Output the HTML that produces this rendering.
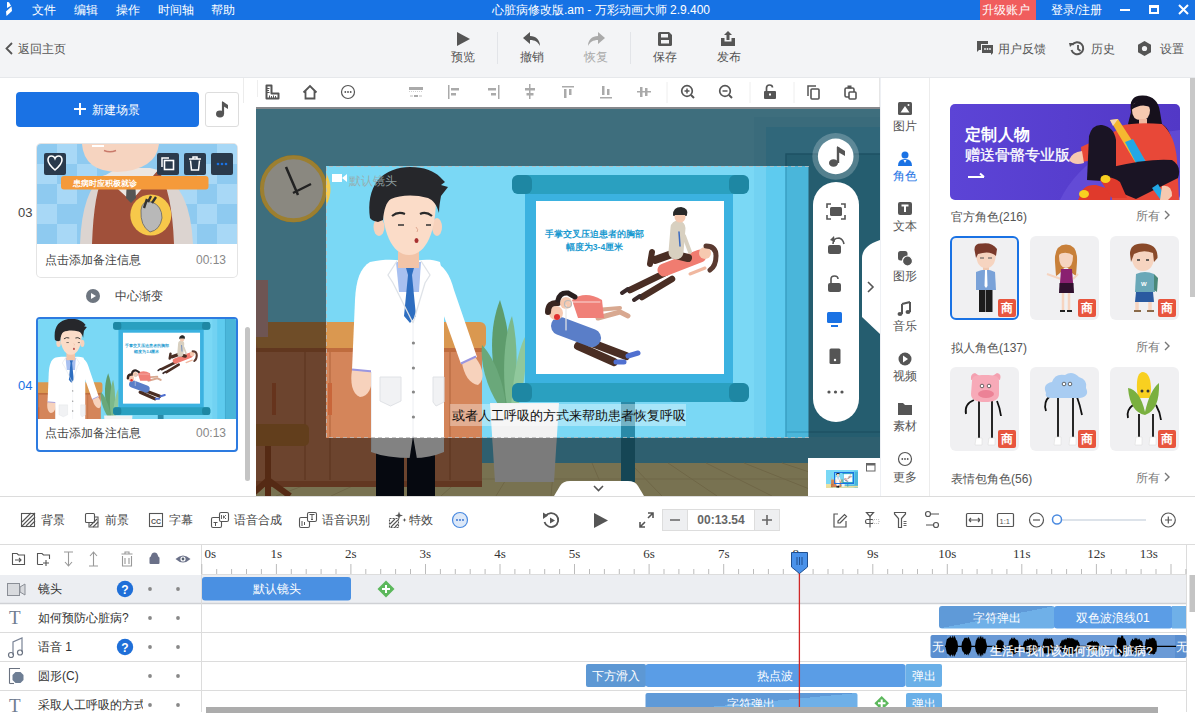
<!DOCTYPE html>
<html><head><meta charset="utf-8">
<style>
*{box-sizing:border-box;margin:0;padding:0}
html,body{width:1195px;height:719px;overflow:hidden;background:#fff;font-family:"Liberation Sans",sans-serif;font-size:13px;color:#333}
.a{position:absolute}
svg{position:absolute;overflow:visible}
#title{left:0;top:0;width:1195px;height:20px;background:#1672e4;color:#fff}
#tb{left:0;top:20px;width:1195px;height:58px;background:#f3f4f6;border-bottom:1px solid #e6e8eb}
.mi{top:3px;font-size:12px;line-height:14px;color:#fff}
.tbt{font-size:12px;line-height:14px;color:#555;white-space:nowrap}
.sep{width:1px;background:#e2e4e8}
</style></head><body>
<!-- title bar -->
<div id="title" class="a">
  <svg style="left:0;top:0" width="20" height="20" viewBox="0 0 20 20"><path d="M7 2L9 2.2L11 5.8L7 8Z" fill="#fff"/><path d="M6 11.5L11.5 6.5L12 11L6.5 16Z" fill="#fff"/></svg>
  <div class="a mi" style="left:32px">文件</div>
  <div class="a mi" style="left:74px">编辑</div>
  <div class="a mi" style="left:116px">操作</div>
  <div class="a mi" style="left:158px">时间轴</div>
  <div class="a mi" style="left:211px">帮助</div>
  <div class="a mi" style="left:450px;width:302px;text-align:center;white-space:nowrap">心脏病修改版.am - 万彩动画大师 2.9.400</div>
  <div class="a" style="left:980px;top:0;width:56px;height:20px;background:#f05d5d"></div>
  <div class="a mi" style="left:982px">升级账户</div>
  <div class="a mi" style="left:1051px">登录/注册</div>
  <div class="a" style="left:1120px;top:9px;width:10px;height:2px;background:#fff"></div>
  <div class="a" style="left:1149px;top:5px;width:10px;height:9px;border:2px solid #fff;border-top-width:3px"></div>
  <svg style="left:1178px;top:4px" width="11" height="11"><path d="M1 1L10 10M10 1L1 10" stroke="#fff" stroke-width="2"/></svg>
</div>
<!-- toolbar -->
<div id="tb" class="a">
  <svg style="left:5px;top:22px" width="8" height="13"><path d="M7 1L1.5 6.5L7 12" stroke="#555" stroke-width="1.8" fill="none"/></svg>
  <div class="a tbt" style="left:18px;top:22px">返回主页</div>

  <svg style="left:457px;top:12px" width="13" height="14"><path d="M0 0L13 7L0 14Z" fill="#555"/></svg>
  <div class="a tbt" style="left:451px;top:30px">预览</div>
  <div class="a sep" style="left:497px;top:12px;height:32px"></div>
  <svg style="left:523px;top:12px" width="18" height="14" viewBox="0 0 18 14"><path d="M7 0L0 6L7 12V8C12 8 15 10 17 14C17 8 13 4 7 4Z" fill="#555"/></svg>
  <div class="a tbt" style="left:520px;top:30px">撤销</div>
  <svg style="left:587px;top:12px" width="18" height="14" viewBox="0 0 18 14"><path d="M11 0L18 6L11 12V8C6 8 3 10 1 14C1 8 5 4 11 4Z" fill="#aaa"/></svg>
  <div class="a tbt" style="left:584px;top:30px;color:#aaa">恢复</div>
  <div class="a sep" style="left:630px;top:12px;height:32px"></div>
  <svg style="left:658px;top:12px" width="14" height="14" viewBox="0 0 14 14"><path d="M0 1.5Q0 0 1.5 0H11L14 3V12.5Q14 14 12.5 14H1.5Q0 14 0 12.5Z" fill="#555"/><rect x="3" y="2" width="7" height="3.5" fill="#f3f4f6"/><rect x="3" y="8" width="8" height="3.5" fill="#f3f4f6"/></svg>
  <div class="a tbt" style="left:653px;top:30px">保存</div>
  <svg style="left:721px;top:11px" width="14" height="15" viewBox="0 0 14 15"><path d="M7 0L11 4H8.5V9H5.5V4H3Z" fill="#555"/><path d="M0 7H3.5V10.5H10.5V7H14V15H0Z" fill="#555"/></svg>
  <div class="a tbt" style="left:717px;top:30px">发布</div>

  <svg style="left:977px;top:21px" width="16" height="15" viewBox="0 0 16 15"><path d="M0 0H11V3H4V9H2L0 11Z" fill="#555"/><path d="M5 4H16V12L14 14V12H5Z" fill="#555"/><circle cx="8" cy="8" r="0.9" fill="#f3f4f6"/><circle cx="10.5" cy="8" r="0.9" fill="#f3f4f6"/><circle cx="13" cy="8" r="0.9" fill="#f3f4f6"/></svg>
  <div class="a tbt" style="left:998px;top:22px">用户反馈</div>
  <svg style="left:1069px;top:21px" width="16" height="15" viewBox="0 0 16 15"><path d="M3.2 4A6 6 0 1 1 2.5 9" stroke="#555" stroke-width="2" fill="none"/><path d="M0 2L5 2L1 6Z" fill="#555"/><path d="M9 4V8L11.5 10" stroke="#555" stroke-width="1.8" fill="none"/></svg>
  <div class="a tbt" style="left:1091px;top:22px">历史</div>
  <svg style="left:1137px;top:21px" width="15" height="15" viewBox="0 0 15 15"><path d="M7.5 0L14 3.75V11.25L7.5 15L1 11.25V3.75Z" fill="#555"/><circle cx="7.5" cy="7.5" r="2.6" fill="#f3f4f6"/></svg>
  <div class="a tbt" style="left:1160px;top:22px">设置</div>
</div>

<!-- left panel -->
<div class="a" style="left:0;top:78px;width:256px;height:418px;background:#fff"></div>
<!-- canvas toolbar -->
<div class="a" style="left:256px;top:78px;width:624px;height:29px;background:#fff"></div>
<!-- canvas -->
<svg style="left:256px;top:107px;overflow:hidden" width="624" height="389" viewBox="256 107 624 389">
<defs>
 <clipPath id="sel"><rect x="326" y="166" width="482" height="272"/></clipPath>
 <clipPath id="cv"><rect x="256" y="107" width="624" height="389"/></clipPath>
 <g id="scene">
  <rect x="256" y="107" width="624" height="389" fill="#7ad8f5"/>
  <rect x="754" y="117" width="126" height="379" fill="#72d2f2"/>
  <rect x="766" y="127" width="114" height="369" fill="#5ecbef"/>
  <rect x="786" y="154" width="94" height="342" fill="#4ab6da"/>
  <path d="M786 437V154H880M786 432H880" stroke="#3aa0c4" stroke-width="1.5" fill="none"/>
  <!-- baseboard + floor -->
  <rect x="256" y="437" width="624" height="26" fill="#5abbd9"/>
  <rect x="256" y="463" width="624" height="33" fill="#ece0a0"/>
  <path d="M250 463L110 496M288 463L166 496M326 463L221 496M364 463L276 496M402 463L331 496M440 463L386 496M478 463L441 496M516 463L496 496M554 463L551 496M592 463L606 496M630 463L662 496M668 463L717 496M706 463L772 496M744 463L827 496M782 463L882 496M820 463L937 496M858 463L992 496M896 463L1047 496M256 479H880" stroke="#d8c88a" stroke-width="1" fill="none"/>
  <!-- cabinet -->
  <rect x="256" y="336" width="226" height="151" fill="#d4855a"/>
  <rect x="256" y="322" width="230" height="27" rx="6" fill="#da9850"/>
  <rect x="256" y="348" width="226" height="4" fill="#bf6c3e"/>
  <path d="M305 352V480M330 352V480M420 352V480M450 352V480" stroke="#c2744a" stroke-width="2"/>
  <rect x="256" y="481" width="226" height="6" fill="#c06c42"/>
  <rect x="272" y="383" width="4" height="32" fill="#c8663a"/>
  <rect x="328" y="383" width="4" height="32" fill="#c8663a"/>
  <!-- stool -->
  <rect x="250" y="424" width="59" height="22" rx="5" fill="#c07a38"/>
  <path d="M268 446V496M268 480L250 496M268 480L290 496" stroke="#a85428" stroke-width="6" fill="none"/>
  <rect x="256" y="280" width="12" height="57" fill="#d8a8a4"/>
  <!-- plant -->
  <path d="M503 405C490 370 488 330 500 300C510 330 514 370 511 405Z" fill="#5e9c6c"/>
  <path d="M499 406C486 386 480 362 482 345C496 360 504 386 506 406Z" fill="#6aa87a"/>
  <path d="M507 406C501 372 505 332 512 316C519 346 517 382 513 406Z" fill="#7cb88a"/>
  <path d="M511 406C513 382 517 352 525 337C528 362 523 392 518 406Z" fill="#90c89c"/>
  <path d="M490 403H559L554 482H495Z" fill="#f2f2f2"/>
  <!-- board -->
  <rect x="621" y="400" width="14" height="82" fill="#2a8aa8"/>
  <rect x="525" y="190" width="208" height="200" fill="#3bb2e0"/>
  <rect x="536" y="201" width="188" height="173" fill="#fff"/>
  <rect x="512" y="175" width="237" height="19" rx="8" fill="#2aa0c0"/>
  <rect x="512" y="175" width="20" height="19" rx="6" fill="#1e87a3"/>
  <rect x="729" y="175" width="20" height="19" rx="6" fill="#1e87a3"/>
  <rect x="512" y="383" width="237" height="19" rx="8" fill="#2aa0c0"/>
  <rect x="512" y="383" width="20" height="19" rx="6" fill="#1e87a3"/>
  <rect x="729" y="383" width="20" height="19" rx="6" fill="#1e87a3"/>
 </g>
 <g id="doctor">
  <!-- pants -->
  <rect x="376" y="450" width="28" height="50" fill="#0c1220"/>
  <rect x="407" y="450" width="28" height="50" fill="#0c1220"/>
  <!-- hands -->
  <path d="M352 370C350 382 352 394 360 397C368 397 373 388 372 372Z" fill="#f7d2bc"/>
  <path d="M462 363C464 375 470 384 478 385C485 380 484 368 475 357Z" fill="#f7d2bc"/>
  <!-- arms -->
  <path d="M370 262C360 268 356 280 355 300L352 370L373 372L376 300Z" fill="#fff"/>
  <path d="M432 262C444 264 450 275 454 290L477 357L461 364L440 305Z" fill="#fff"/>
  <path d="M352 369.5L373 371.5" stroke="#9a96e0" stroke-width="2"/>
  <path d="M461 363.5L476 356.5" stroke="#9a96e0" stroke-width="2"/>
  <!-- coat -->
  <path d="M370 262C388 258 400 260 409 262C418 260 430 258 440 262C444 280 444 300 444 305V452Q430 458 413 458Q386 458 371 452V300C371 290 370 275 370 262Z" fill="#fff"/>
  <path d="M371.5 372V450" stroke="#eef0f4" stroke-width="1"/>
  <path d="M396 262H421L419 292H399Z" fill="#a8c0f0"/>
  <path d="M406 268H414L412 275L416 316L410 323L404 316L408 275Z" fill="#2e6ec0"/>
  <path d="M397 261L388 275L393 283L413 323M421 261L430 275L425 283L413 323" stroke="#dfe3e8" stroke-width="1.3" fill="none"/>
  <path d="M413 323V438" stroke="#eceef2" stroke-width="1"/><path d="M413 436L409.5 459H417Z" fill="#0c1220"/>
  <circle cx="413.4" cy="343" r="1.6" fill="#888"/><circle cx="413.4" cy="368" r="1.6" fill="#888"/><circle cx="413.4" cy="392" r="1.6" fill="#888"/><circle cx="413.4" cy="417" r="1.6" fill="#888"/>
  <path d="M380 377H401V401L390.5 406L380 401Z" fill="#f1f2f4" stroke="#e0e2e6" stroke-width="1"/>
  <path d="M433 377H444V402L436 406L433 402Z" fill="#f1f2f4" stroke="#e0e2e6" stroke-width="1"/>
  <!-- neck/face -->
  <rect x="398" y="248" width="21" height="20" fill="#f2c4a8"/>
  <ellipse cx="379" cy="227" rx="5.5" ry="9" fill="#f7d2bc"/>
  <ellipse cx="437" cy="227" rx="5" ry="9" fill="#f7d2bc"/>
  <path d="M382 192C381 232 392 255 409 255C426 255 437 232 436 192Z" fill="#fbdcc8"/>
  <path d="M370 218C368 204 370 190 378 180C386 171 398 167 410 167C424 167 434 171 440 177L445 182L441 185L448 187L441 196C440 202 439 207 439 213C437 205 433 200 428 198C414 194 400 195 391 199C386 202 384 210 383 220L378 222C374 221 371 220 370 218Z" fill="#26272b"/>
  <path d="M392 216Q398 211 405 214M420 214Q426 211 432 216" stroke="#2a2a2a" stroke-width="2.2" fill="none"/>
  <path d="M398 225H404M426 225H431" stroke="#333" stroke-width="1.6"/>
  <path d="M416 227Q419 230 417 232" stroke="#e0a890" stroke-width="1" fill="none"/>
  <ellipse cx="416.5" cy="240.5" rx="2" ry="2.6" fill="#a83030"/>
 </g>
 <g id="board">

<text x="594" y="236.5" font-size="8.9" fill="#1a9ad0" text-anchor="middle" font-weight="bold">手掌交叉压迫患者的胸部</text>
<text x="594.5" y="249.5" font-size="8.6" fill="#1a9ad0" text-anchor="middle" font-weight="bold">幅度为3-4厘米</text>
<g stroke-linecap="round" fill="none">
 <!-- top woman lying -->
 <path d="M667 272L630 290M672 279L642 297" stroke="#4a2e24" stroke-width="6.5"/>
 <path d="M628 289L622 293M640 296L634 300" stroke="#3a2a2a" stroke-width="4"/>
 <path d="M664 270L700 256" stroke="#f07c70" stroke-width="13"/>
 <path d="M690 274L705 268" stroke="#f0b8a0" stroke-width="3"/>
 <circle cx="705" cy="253" r="6" fill="#f6c9b0"/>
 <path d="M706 246Q716 246 716 256Q716 266 710 270" stroke="#5a3a30" stroke-width="5"/>
 <!-- top man kneeling -->
 <path d="M655 260L672 254L688 258" stroke="#4a2e24" stroke-width="8"/>
 <path d="M652 252L650 264" stroke="#4a2e24" stroke-width="6"/>
 <path d="M678 228L676 252" stroke="#d8d0c0" stroke-width="15"/>
 <path d="M679 232L680 246" stroke="#3a6ac0" stroke-width="1.5"/>
 <path d="M684 236L690 252" stroke="#d8d0c0" stroke-width="4"/>
 <circle cx="680" cy="217" r="5.5" fill="#f6c9b0"/>
 <path d="M674 215Q674 208 681 208Q688 209 686 215" fill="#2a2a2a" stroke="#2a2a2a" stroke-width="2"/>
 <!-- bottom man lying -->
 <path d="M584 340L626 356M578 346L614 362" stroke="#4a2e24" stroke-width="8"/>
 <path d="M628 356L638 353M616 362L624 362" stroke="#5070d0" stroke-width="5"/>
 <path d="M560 326L592 338" stroke="#5a7ec8" stroke-width="18"/>
 <circle cx="556" cy="313" r="7" fill="#f6c9b0"/>
 <path d="M548 312Q548 302 558 303" stroke="#3a2620" stroke-width="6"/>
 <circle cx="557" cy="317" r="3" fill="#e03030"/>
 <!-- bottom woman kneeling -->
 <path d="M598 318L620 312L628 316" stroke="#d8a890" stroke-width="5"/>
 <path d="M596 310L620 308" stroke="#d8a890" stroke-width="4"/>
 <path d="M572 300Q585 290 602 300L604 318L578 318Z" fill="#f08078"/>
 <circle cx="566" cy="303" r="6" fill="#f6c9b0"/>
 <path d="M558 300Q560 292 568 293L575 297" stroke="#2a2020" stroke-width="5"/>
 <path d="M566 305V330" stroke="#e8e8e8" stroke-width="1.2"/>
 <path d="M570 302H600" stroke="#fff" stroke-width="1" stroke-opacity="0.7"/>
 <circle cx="568" cy="304" r="3.5" stroke="#bbb" stroke-width="1.2"/>
</g>
 </g>
 <path id="ov" fill-rule="evenodd" d="M256 107H880V496H256Z M326 166H808.5V438H326Z"/>
</defs>
<use href="#scene"/>
<!-- clock (outside) -->
<circle cx="293.5" cy="188.8" r="31.5" fill="#f8f0e0" stroke="#f0c848" stroke-width="4"/>
<use href="#doctor"/>
<use href="#board"/>
<!-- overlay -->
<use href="#ov" fill="#000" fill-opacity="0.49"/>
<!-- clock hands over overlay -->
<circle cx="293.5" cy="188.8" r="31.5" fill="#8a8880" stroke="#9c7f30" stroke-width="4"/>
<path d="M286 167L298 195M293 193L311 184" stroke="#222" stroke-width="2.5"/>
<path d="M326 173Q335 189 326 206Z" fill="#f5cc50"/>
<!-- selection dashed border -->
<path d="M809 166.5H326.5V437.5H809" fill="none" stroke="#bbb" stroke-opacity="0.8" stroke-width="1" stroke-dasharray="4 3"/>
<!-- camera label -->
<rect x="332" y="174" width="10" height="8" fill="#fff"/><path d="M342 178L347 174V182Z" fill="#fff"/>
<text x="349" y="185" font-size="12" fill="#9aa" fill-opacity="0.9">默认镜头</text>
<!-- subtitle -->
<rect x="450" y="404" width="236" height="22" fill="#fff" fill-opacity="0.35"/>
<text x="452" y="420" font-size="13" fill="#111">或者人工呼吸的方式来帮助患者恢复呼吸</text>
<!-- right tools -->
<circle cx="835.7" cy="156.4" r="23.4" fill="#fff" fill-opacity="0.22"/>
<circle cx="835.7" cy="156.4" r="17.8" fill="#fff"/>
<path d="M838 147V163" stroke="#555" stroke-width="2.4"/><ellipse cx="833.5" cy="163" rx="4.5" ry="3.8" fill="#555"/><path d="M837 146L845 151L845 156L838 152Z" fill="#555"/>
<rect x="813" y="182" width="46" height="240" rx="23" fill="#fff"/>
<g fill="#555">
 <rect x="830" y="207" width="12" height="9" rx="1.5"/>
 <path d="M827 208V204H831M841 204H845V208M845 215V219H841M831 219H827V215" stroke="#555" stroke-width="1.6" fill="none"/>
 <rect x="828" y="245" width="13" height="9" rx="2"/>
 <path d="M833 244Q833 238 839 238Q843 239 844 244" stroke="#555" stroke-width="1.6" fill="none"/><path d="M830 240L834 236L835 242Z"/>
 <rect x="828" y="283" width="13" height="9" rx="2"/>
 <path d="M831 283V279Q831 276 834.5 276Q838 276 838 279" stroke="#555" stroke-width="1.6" fill="none"/>
 <rect x="829.5" y="348.5" width="11" height="15.5" rx="1.5"/>
 <circle cx="829" cy="392" r="1.6"/><circle cx="835.5" cy="392" r="1.6"/><circle cx="842" cy="392" r="1.6"/>
</g>
<rect x="827" y="312" width="15" height="11" rx="1.5" fill="#1a72e4"/><rect x="831" y="325" width="7" height="2" fill="#1a72e4"/>
<circle cx="835" cy="360" r="1.2" fill="#fff"/>
<!-- collapse tab right -->
<path d="M880 240V334L862 317V258Q862 246 880 240Z" fill="#fff" />
<path d="M868 282L873 287L868 292" stroke="#555" stroke-width="1.6" fill="none"/>
<!-- bottom collapse tab -->
<path d="M554 496L560 486Q563 481 570 481H628Q635 481 638 486L644 496Z" fill="#fff"/>
<path d="M594 486L598.5 490.5L603 486" stroke="#555" stroke-width="1.6" fill="none"/>
<!-- minimap -->
<rect x="808" y="458" width="72" height="38" fill="#fff"/>
<clipPath id="mm"><rect x="826" y="470" width="32" height="18"/></clipPath>
<g clip-path="url(#mm)"><rect x="826" y="470" width="32" height="18" fill="#7ad8f5"/><rect x="826" y="484" width="32" height="4" fill="#ece0a0"/><g transform="translate(819.6,465.1) scale(0.045)"><use href="#scene"/><use href="#doctor"/><use href="#board"/></g></g>
<rect x="834.5" y="472.5" width="19" height="11" fill="none" stroke="#1a72e4" stroke-width="1"/>
<rect x="866.5" y="463.5" width="8.5" height="7.5" fill="none" stroke="#666" stroke-width="1"/><rect x="866.5" y="463.5" width="8.5" height="2" fill="#666"/>
<rect x="256" y="107" width="624" height="2" fill="#86888c"/>
</svg>

<!-- canvas toolbar icons -->
<svg style="left:256px;top:78px" width="624" height="29" viewBox="256 78 624 29">
<path d="M266.5 85.5H271.5V93.5H278.5V98.5H266.5Z" fill="#fff" stroke="#555" stroke-width="2" stroke-linejoin="round"/><path d="M269.5 98V95.5M271.5 98V96M273.5 98V95.5M275.5 98V96M267 88.5H269.5M267 90.5H269M267 92.5H269.5" stroke="#555" stroke-width="1"/>
<path d="M303.5 92.5L310 86L316.5 92.5M305.5 91V98.5H314.5V91" stroke="#555" stroke-width="1.8" fill="none"/>
<circle cx="348" cy="92" r="6.5" stroke="#555" stroke-width="1.2" fill="none"/>
<circle cx="345.3" cy="92" r="0.9" fill="#555"/><circle cx="348" cy="92" r="0.9" fill="#555"/><circle cx="350.7" cy="92" r="0.9" fill="#555"/>
<g fill="#aaa">
 <rect x="409" y="87" width="14" height="3"/><path d="M409 91.5H423" stroke="#bbb" stroke-width="0.7" stroke-dasharray="1 1"/><rect x="414" y="95" width="4" height="2"/><path d="M410 96H413M419 96H422" stroke="#aaa" stroke-width="0.8"/>
 <rect x="448" y="85" width="1.5" height="14"/><rect x="451" y="88" width="8" height="2.5"/><rect x="451" y="93" width="5" height="2.5"/>
 <rect x="498" y="85" width="1.5" height="14"/><rect x="488" y="88" width="8" height="2.5"/><rect x="491" y="93" width="5" height="2.5"/>
 <rect x="529" y="84" width="1.5" height="15"/><rect x="525" y="88" width="10" height="2.5"/><rect x="526.5" y="93" width="7" height="2.5"/>
 <rect x="562" y="86" width="12" height="1.5"/><rect x="564" y="89" width="2.5" height="9"/><rect x="569" y="89" width="2.5" height="6"/>
 <rect x="600" y="97" width="12" height="1.5"/><rect x="602" y="86" width="2.5" height="9"/><rect x="607" y="89" width="2.5" height="6"/>
 <rect x="637" y="91" width="14" height="1.5"/><rect x="640" y="87" width="2.5" height="10"/><rect x="645" y="88" width="2.5" height="8"/>
</g>
<path d="M667 82V103M750 82V103M794 82V103" stroke="#eee" stroke-width="1"/>
<circle cx="687" cy="91" r="5.3" stroke="#555" stroke-width="1.7" fill="none"/><path d="M691 95L694 98" stroke="#555" stroke-width="2"/><path d="M684.5 91H689.5M687 88.5V93.5" stroke="#555" stroke-width="1.5"/>
<circle cx="725" cy="91" r="5.3" stroke="#555" stroke-width="1.7" fill="none"/><path d="M729 95L732 98" stroke="#555" stroke-width="2"/><path d="M722.5 91H727.5" stroke="#555" stroke-width="1.5"/>
<rect x="764" y="91" width="12" height="8" rx="1" fill="#555"/><path d="M766.5 91V88Q766.5 85 769.5 85Q772.5 85 772.5 87.5" stroke="#555" stroke-width="1.7" fill="none"/><rect x="769" y="93.5" width="2" height="2" fill="#fff"/>
<path d="M808 96V86H816" stroke="#555" stroke-width="1.5" fill="none"/><rect x="811" y="89" width="8" height="10" rx="1" stroke="#555" stroke-width="1.6" fill="none"/>
<rect x="845" y="88" width="9" height="9" rx="1.5" stroke="#555" stroke-width="1.6" fill="none"/><rect x="849" y="92" width="7" height="7" rx="1" stroke="#555" stroke-width="1.6" fill="#fff"/><rect x="847.5" y="85.5" width="4" height="3" fill="#555"/>
<path d="M879.5 78V107" stroke="#e6e6e6"/><path d="M257.5 80V97" stroke="#eee"/>
</svg>

<!-- icon column -->
<div class="a" style="left:880px;top:78px;width:50px;height:418px;background:#fff;border-right:1px solid #ececec;border-left:1px solid #eef0f4"></div>
<style>
.ic{position:absolute;width:50px;text-align:center;font-size:12px;line-height:13px;color:#555}
.rh{position:absolute;font-size:12px;line-height:14px;color:#555}
.all{position:absolute;font-size:12px;line-height:14px;color:#777}
.card{position:absolute;width:69px;height:84px;border-radius:6px;background:#f0f0f2}
.bd{position:absolute;right:3px;bottom:3px;width:18px;height:18px;border-radius:2px;background:#e8553e;color:#fff;font-size:12px;line-height:18px;text-align:center;font-weight:bold}
</style>
<svg style="left:880px;top:78px" width="50" height="418" viewBox="880 78 50 418">
 <rect x="898" y="102" width="14" height="13" rx="1.5" fill="#555"/><path d="M900.5 112.5L905 106L909.5 112.5Z" fill="#fff"/><circle cx="908.5" cy="105" r="1" fill="#fff"/>
 <circle cx="905" cy="155" r="3.5" fill="#1a72e4"/><path d="M898 166Q898 159 905 159Q912 159 912 166Z" fill="#1a72e4"/><path d="M903.5 160L905 163L906.5 160" fill="#fff"/>
 <rect x="898" y="202" width="14" height="13" rx="2" fill="#555"/><path d="M901.5 205.5H908.5M905 205.5V212" stroke="#fff" stroke-width="2"/>
 <rect x="898" y="251" width="9.5" height="9.5" rx="2.5" fill="#555"/><circle cx="907.5" cy="261" r="5" fill="#555" stroke="#fff" stroke-width="1.2"/>
 <path d="M902 304V314M910 302V312M902 304L910 302" stroke="#555" stroke-width="2" fill="none"/><ellipse cx="900" cy="314" rx="2.5" ry="2" fill="#555"/><ellipse cx="908" cy="312" rx="2.5" ry="2" fill="#555"/>
 <circle cx="905" cy="359" r="6.5" fill="#555"/><path d="M903 355.5V362.5L908 359Z" fill="#fff"/>
 <path d="M898 403H903L905 405H912V415H898Z" fill="#555"/>
 <circle cx="905" cy="459" r="6.5" fill="none" stroke="#555" stroke-width="1.2"/><circle cx="902.3" cy="459" r="0.9" fill="#555"/><circle cx="905" cy="459" r="0.9" fill="#555"/><circle cx="907.7" cy="459" r="0.9" fill="#555"/>
</svg>
<div class="ic" style="left:880px;top:120px">图片</div>
<div class="ic" style="left:880px;top:170px;color:#1a72e4">角色</div>
<div class="ic" style="left:880px;top:220px">文本</div>
<div class="ic" style="left:880px;top:270px">图形</div>
<div class="ic" style="left:880px;top:320px">音乐</div>
<div class="ic" style="left:880px;top:370px">视频</div>
<div class="ic" style="left:880px;top:420px">素材</div>
<div class="ic" style="left:880px;top:471px">更多</div>

<!-- right panel -->
<div class="a" style="left:930px;top:78px;width:265px;height:418px;background:#fff"></div>
 <svg style="left:930px;top:78px" width="265" height="418" viewBox="930 78 265 418">
  <defs><linearGradient id="bg1" x1="0" x2="1"><stop offset="0" stop-color="#5c44d6"/><stop offset="1" stop-color="#5238c6"/></linearGradient>
  <clipPath id="bcl"><rect x="950" y="90" width="230" height="110"/></clipPath></defs>
  <rect x="950" y="104" width="230" height="96" rx="5" fill="url(#bg1)"/>
  <path d="M1060 200Q1090 140 1180 130V200Z" fill="#6a55dc" fill-opacity="0.6"/>
  <g clip-path="url(#bcl)">
   <path d="M1131 112Q1128 95 1143 95.5Q1158 96 1160 112L1162 124Q1172 130 1173 150L1150 150L1128 124Z" fill="#16101c"/>
   <path d="M1132 110Q1132 120 1141 120Q1150 120 1150 110Q1149 101 1141 101Q1133 101 1132 110Z" fill="#f6c9b0"/>
   <path d="M1131 110Q1134 99 1145 99Q1152 101 1152 108Q1142 102 1131 110Z" fill="#16101c"/>
   <rect x="1139" y="119" width="8" height="6" fill="#f0b8a0"/>
   <path d="M1120 126Q1135 122 1162 124Q1175 135 1177 160L1179 200H1112L1112 150Z" fill="#e84838"/>
   <path d="M1122 128L1081 147L1082 162L1118 156Z" fill="#e84838"/>
   <path d="M1082 151Q1072 152 1069 160Q1074 166 1084 163Z" fill="#f6c9b0"/>
   <path d="M1087 180L1089 136Q1092 124 1102 125Q1114 127 1116 140L1116 182Z" fill="#1a1424"/>
   <path d="M1110 120L1118 119L1146 162L1138 167Z" fill="#f5b830"/>
   <path d="M1125 142L1133 139L1146 162L1138 167Z" fill="#22a8e6"/>
   <path d="M1110 120L1118 119L1113 126Z" fill="#f6d8b0"/>
   <path d="M1112 167Q1150 158 1172 160Q1182 166 1178 178L1136 199L1114 190Z" fill="#1a1424"/>
   <path d="M1152 188L1158 184L1165 196L1160 199Z" fill="#22a8e6"/>
   <path d="M1079 198Q1082 184 1096 185L1112 190L1110 200H1078Z" fill="#e03a2c"/>
   <path d="M1100 180Q1110 174 1120 182L1127 198H1112Z" fill="#e03a2c"/>
   <ellipse cx="1084" cy="194" rx="5" ry="4" fill="#f8d020"/>
   <ellipse cx="1105.5" cy="179" rx="5" ry="4" fill="#f8d020"/>
   <path d="M1162 186Q1172 184 1172 196L1168 200H1160Z" fill="#f6c9b0"/>
  </g>
  <path d="M968 177H984M980 173.5L984 177" stroke="#fff" stroke-width="2" fill="none"/>
 </svg>
 <div class="a" style="left:965px;top:126px;font-size:15.5px;line-height:18px;color:#fff;font-weight:bold;letter-spacing:0.3px">定制人物</div>
 <div class="a" style="left:965px;top:146px;font-size:14.5px;line-height:18px;color:#fff;font-weight:normal;-webkit-text-stroke:0.3px #fff">赠送骨骼专业版</div>
 <div class="rh" style="left:951px;top:210px">官方角色(216)</div>
 <div class="all" style="left:1136px;top:209px">所有</div>
 <div class="rh" style="left:951px;top:341px">拟人角色(137)</div>
 <div class="all" style="left:1136px;top:340px">所有</div>
 <div class="rh" style="left:951px;top:472px">表情包角色(56)</div>
 <div class="all" style="left:1136px;top:471px">所有</div>
 <svg style="left:1164px;top:210px" width="6" height="10"><path d="M1 1L5 5L1 9" stroke="#777" stroke-width="1.4" fill="none"/></svg>
 <svg style="left:1164px;top:341px" width="6" height="10"><path d="M1 1L5 5L1 9" stroke="#777" stroke-width="1.4" fill="none"/></svg>
 <svg style="left:1164px;top:472px" width="6" height="10"><path d="M1 1L5 5L1 9" stroke="#777" stroke-width="1.4" fill="none"/></svg>
 <div class="card" style="left:950px;top:236px;border:2px solid #1a72e4"></div>
 <div class="card" style="left:1030px;top:236px"></div>
 <div class="card" style="left:1110px;top:236px"></div>
 <div class="card" style="left:950px;top:367px"></div>
 <div class="card" style="left:1030px;top:367px"></div>
 <div class="card" style="left:1110px;top:367px"></div>
 <svg style="left:930px;top:230px" width="260" height="240" viewBox="930 230 260 240">
  <!-- man -->
  <rect x="979" y="288" width="6.5" height="24" fill="#1c1c1c"/><rect x="986" y="288" width="6.5" height="24" fill="#1c1c1c"/>
  <path d="M976 272Q986 267 995 272L996 290H976Z" fill="#7aa2d8"/>
  <path d="M985 270H987L987.5 286L986 288L984.5 286Z" fill="#fff"/>
  <rect x="983" y="265" width="6" height="5" fill="#f0c8b0"/>
  <path d="M976 252Q976 268 986 268Q996 268 996 252Z" fill="#f6d4c0"/>
  <path d="M974.5 250Q974 243 982 243.5Q992 242 997 249L996 256Q990 250 978 254L976 258Z" fill="#7a3a2c"/>
  <path d="M980 258H984M988 258H992" stroke="#555" stroke-width="1"/>
  <!-- woman -->
  <path d="M1055 262Q1054 245 1066 244.5Q1078 245 1077 262L1076 276Q1070 272 1068 268H1064Q1060 274 1056 276Z" fill="#c8803a"/>
  <path d="M1059 256Q1059 268 1066 268Q1073 268 1073 256Q1072 249 1066 249Q1060 249 1059 256Z" fill="#f6d4c0"/>
  <path d="M1058 255Q1060 247 1068 248Q1074 250 1074 256Q1066 250 1058 255Z" fill="#c8803a"/>
  <path d="M1047 274L1061 279M1073 279L1078 274" stroke="#f6d4c0" stroke-width="2"/>
  <path d="M1061 269H1072L1073 283H1060Z" fill="#8a2070"/>
  <path d="M1059.5 283H1073.5L1074 293H1059Z" fill="#30102e"/>
  <path d="M1063 293V310M1069 293V310" stroke="#f6d4c0" stroke-width="2.5"/>
  <path d="M1060 311H1065M1067 311H1072" stroke="#222" stroke-width="1.8"/>
  <!-- boy -->
  <path d="M1137 302V310M1150 302V310" stroke="#f6d4c0" stroke-width="3.5"/>
  <path d="M1134 311H1141M1147 311H1154" stroke="#8a6a4a" stroke-width="2"/>
  <path d="M1136 292H1153L1154 302H1135Z" fill="#2a5aa0"/>
  <path d="M1136 274Q1145 270 1154 274L1155 292H1135Z" fill="#6aa8b8"/>
  <path d="M1154 274L1158 278L1157 292L1154 290Z" fill="#4a8878"/>
  <text x="1141" y="286" font-size="6" fill="#fff" font-weight="bold">W</text>
  <path d="M1131 250Q1131 271 1143 271Q1155 271 1155 250Z" fill="#f6d4c0"/>
  <path d="M1130 254Q1130 243 1143 243.5Q1158 244 1157.5 258L1154 262L1153 253Q1143 249 1134 254L1131 262Z" fill="#8a4a2a"/>
  <path d="M1137 260H1140M1146 260H1149" stroke="#333" stroke-width="1.5"/>
  <!-- pig -->
  <path d="M979 401V438M992 401V438" stroke="#111" stroke-width="1.8"/>
  <path d="M974 400Q964 404 966 414M997 401Q1000 408 1001 416" stroke="#111" stroke-width="1.8" fill="none"/>
  <path d="M976 438H982V445H975ZM989 438H995V445H988Z" fill="#fff" stroke="#ddd" stroke-width="0.6"/>
  <path d="M971 380Q970 374 975 373L981 377M991 377L997 373Q1002 374 1000 380" fill="#f4a0b0"/>
  <path d="M972 381Q971 374 985 375Q1000 374 999 381L999 394Q999 402 985 402Q971 402 971 394Z" fill="#f7aab8"/>
  <ellipse cx="986" cy="394" rx="8" ry="4" fill="#ec8296"/>
  <circle cx="982" cy="386" r="1.8" fill="#fff" stroke="#333" stroke-width="0.7"/><circle cx="989" cy="386" r="1.8" fill="#fff" stroke="#333" stroke-width="0.7"/>
  <!-- cloud -->
  <path d="M1058 397V437M1073 397V437" stroke="#111" stroke-width="1.8"/>
  <path d="M1050 396Q1043 402 1046 411M1077 397Q1080 405 1082 415" stroke="#111" stroke-width="1.8" fill="none"/>
  <path d="M1055 437H1061V445H1054ZM1070 437H1076V445H1069Z" fill="#fff" stroke="#ddd" stroke-width="0.6"/>
  <path d="M1046 393Q1042 384 1052 382Q1055 373 1065 375Q1072 370 1079 377Q1088 380 1086 388Q1090 396 1080 398H1052Q1044 398 1046 393Z" fill="#a8ccf2"/>
  <circle cx="1064" cy="384" r="1.8" fill="#fff" stroke="#333" stroke-width="0.7"/><circle cx="1070" cy="384" r="1.8" fill="#fff" stroke="#333" stroke-width="0.7"/>
  <!-- corn -->
  <path d="M1139 414V437M1153 414V437" stroke="#111" stroke-width="1.8"/>
  <path d="M1133 405Q1126 410 1128 418M1156 405Q1160 412 1161 420" stroke="#111" stroke-width="1.8" fill="none"/>
  <path d="M1136 437H1142V445H1135ZM1150 437H1156V445H1149Z" fill="#fff" stroke="#ddd" stroke-width="0.6"/>
  <path d="M1137 390Q1136 372 1143 372Q1151 373 1151 390L1150 398H1138Z" fill="#f8d020"/>
  <path d="M1128 388Q1140 390 1145 412Q1150 390 1159 383Q1160 410 1145 415Q1130 412 1128 388Z" fill="#7ab040"/>
  <circle cx="1142" cy="391" r="1.5" fill="#333"/><circle cx="1148" cy="391" r="1.5" fill="#333"/>
 </svg>
 <div class="bd" style="left:998px;top:299px">商</div>
 <div class="bd" style="left:1078px;top:299px">商</div>
 <div class="bd" style="left:1158px;top:299px">商</div>
 <div class="bd" style="left:998px;top:430px">商</div>
 <div class="bd" style="left:1078px;top:430px">商</div>
 <div class="bd" style="left:1158px;top:430px">商</div>


<div class="a" style="left:1190px;top:78px;width:5px;height:219px;background:#c8c8c8"></div>

<!-- left panel content -->
<div class="a" style="left:243px;top:78px;width:1px;height:25px;background:#ececec"></div>
<div class="a" style="left:16px;top:92px;width:183px;height:35px;border-radius:4px;background:#1a72e4"></div>
<svg style="left:74px;top:103px" width="12" height="12"><path d="M6 0V12M0 6H12" stroke="#fff" stroke-width="2"/></svg>
<div class="a" style="left:92px;top:103px;font-size:12px;line-height:15px;color:#fff">新建场景</div>
<div class="a" style="left:205px;top:92px;width:34px;height:35px;border-radius:3px;border:1px solid #ddd;background:#fff"></div>
<svg style="left:214px;top:101px" width="16" height="17" viewBox="0 0 16 17"><path d="M9 1V13" stroke="#555" stroke-width="2.2"/><ellipse cx="6" cy="13" rx="4" ry="3.4" fill="#555"/><path d="M8 0L14 4V8L9 5Z" fill="#555"/></svg>
<div class="a" style="left:18px;top:205px;font-size:13px;line-height:15px;color:#444">03</div>
<div class="a" style="left:18px;top:378px;font-size:13px;line-height:15px;color:#1a72e4">04</div>
<!-- card 03 -->
<div class="a" style="left:37px;top:144px;width:200px;height:133px;border-radius:4px;background:#fff;box-shadow:0 0 0 1px #e4e4e4;overflow:hidden">
 <svg style="left:0;top:0;overflow:hidden" width="200" height="100" viewBox="37 144 200 100">
  <rect x="37" y="144" width="200" height="100" fill="#8ecaf0"/>
  <g fill="#a8d8f6">
   <rect x="37" y="164" width="20" height="20"/><rect x="77" y="164" width="20" height="20"/><rect x="197" y="164" width="20" height="20"/>
   <rect x="57" y="184" width="20" height="20"/><rect x="177" y="184" width="20" height="20"/><rect x="217" y="184" width="20" height="20"/>
   <rect x="37" y="204" width="20" height="20"/><rect x="197" y="204" width="20" height="20"/>
   <rect x="57" y="224" width="20" height="20"/><rect x="177" y="224" width="20" height="20"/><rect x="217" y="224" width="20" height="20"/>
   <rect x="57" y="144" width="20" height="20"/><rect x="217" y="144" width="20" height="20"/>
  </g>
  <path d="M80 244Q82 190 104 175H160Q190 185 193 244Z" fill="#dcd4d0"/>
  <path d="M92 244Q94 190 104 176L131 201L158 170Q172 190 174 244Z" fill="#a0503a"/>
  <path d="M104 176L118 168H150L158 170L131 201Z" fill="#ece6e2"/>
  <path d="M127 180H135L136 198L131 203L126 198Z" fill="#555"/>
  <path d="M82 144Q84 171 117 172Q156 170 159 144Z" fill="#f6d4c0"/>
  <path d="M104 150.5Q110 153 116 150.5" stroke="#c97a6a" stroke-width="1.4" fill="none"/>
  <path d="M92 146H104" stroke="#fff" stroke-width="2"/>
  <rect x="61" y="176" width="147.5" height="13.5" rx="3" fill="#f59a3a"/>
  <text x="73" y="186" font-size="8" fill="#fff" font-weight="bold">患病时应积极就诊</text>
  <circle cx="150.8" cy="215" r="20.5" fill="#f7c84a"/>
  <path d="M141 210Q142 200 152 202Q162 206 162 218Q160 230 150 232Q140 226 141 210Z" fill="#b8b8b8" stroke="#666" stroke-width="0.8"/>
  <path d="M144 208L147 199M152 203L156 197M148 202L151 196" stroke="#333" stroke-width="2.4"/>
  <rect x="44" y="153" width="22" height="22" rx="2" fill="#2a3a4c"/>
  <path d="M55 170Q48 164 48 160Q48 156 51.5 156Q54 156 55 158.5Q56 156 58.5 156Q62 156 62 160Q62 164 55 170Z" fill="none" stroke="#fff" stroke-width="1.6"/>
  <rect x="157" y="153" width="22" height="22" rx="2" fill="#2a3a4c"/>
  <path d="M162 167V158H169" stroke="#fff" stroke-width="1.5" fill="none"/><rect x="164.5" y="160.5" width="9" height="9" stroke="#fff" stroke-width="1.6" fill="none"/>
  <rect x="184" y="153" width="22" height="22" rx="2" fill="#2a3a4c"/>
  <path d="M189 159H201M193 159V157H197V159M190.5 160.5L191.5 170H198.5L199.5 160.5" stroke="#fff" stroke-width="1.5" fill="none"/>
  <rect x="211" y="153" width="22" height="22" rx="2" fill="#2a3a4c"/>
  <circle cx="218" cy="164" r="1.3" fill="#1a72e4"/><circle cx="222" cy="164" r="1.3" fill="#1a72e4"/><circle cx="226" cy="164" r="1.3" fill="#1a72e4"/>
 </svg>
 <div class="a" style="left:8px;top:109px;font-size:12px;line-height:14px;color:#444">点击添加备注信息</div>
 <div class="a" style="left:159px;top:109px;font-size:12px;line-height:14px;color:#888">00:13</div>
</div>
<svg style="left:86px;top:289px" width="14" height="14"><circle cx="7" cy="7" r="7" fill="#6e7680"/><path d="M5 4V10L10 7Z" fill="#fff"/></svg>
<div class="a" style="left:115px;top:289px;font-size:12px;line-height:14px;color:#444">中心渐变</div>
<!-- card 04 -->
<div class="a" style="left:36px;top:317px;width:202px;height:135px;border-radius:4px;background:#fff;border:2px solid #2d7be0;overflow:hidden">
 <svg style="left:0;top:0;overflow:hidden" width="198" height="100" viewBox="38 319 198 100">
  <g transform="translate(-96.8,250.3) scale(0.41)">
   <use href="#scene"/><use href="#doctor"/><use href="#board"/>
  </g>
 </svg>
 <div class="a" style="left:7px;top:107px;font-size:12px;line-height:14px;color:#444">点击添加备注信息</div>
 <div class="a" style="left:158px;top:107px;font-size:12px;line-height:14px;color:#888">00:13</div>
</div>
<div class="a" style="left:245px;top:327px;width:5px;height:154px;border-radius:3px;background:#c4c4c4"></div>

<!-- bottom toolbar -->
<div class="a" style="left:0;top:496px;width:1195px;height:49px;background:#fff;border-top:1px solid #dcdcdc;border-bottom:1px solid #dcdcdc"></div>
<style>.bt{position:absolute;top:513px;font-size:12px;line-height:14px;color:#444}</style>
<svg style="left:0;top:497px" width="1195" height="47" viewBox="0 497 1195 47">
 <g stroke="#555" fill="none" stroke-width="1.1">
  <rect x="21.5" y="513.5" width="13" height="13"/><path d="M22 522L31 513M22 526L35 513M26 526L35 517M30 526L35 521"/>
  <rect x="85.5" y="513.5" width="9" height="9" rx="1"/><path d="M95 517H98V527H89V523"/><path d="M90 526L97 519M93 527L98 522"/>
  <rect x="149.5" y="513.5" width="13" height="13"/>
  <rect x="211.5" y="517.5" width="10" height="10" rx="1.5"/><rect x="219.5" y="512.5" width="9" height="9" rx="1.5" fill="#fff"/>
  <rect x="299.5" y="517.5" width="10" height="10" rx="1.5"/><rect x="307.5" y="512.5" width="9" height="9" rx="1.5" fill="#fff"/>
  <rect x="389.5" y="518.5" width="9" height="9" stroke-dasharray="2 1"/>
  <path d="M390 524L395 519M391 527L398 520M395 527L398 524"/>
 </g>
 <text x="151" y="523.5" font-size="7" fill="#555" font-weight="bold">CC</text>
 <path d="M213.5 522.5H217.5M215.5 522.5V526" stroke="#555" stroke-width="1"/><path d="M221.5 515V519M223.5 515.5V518.5M226 515L224.5 516.5V517.5L226 519" stroke="#555" stroke-width="0.9" fill="none"/>
 <path d="M302 521V526M304.5 522V525" stroke="#555" stroke-width="1"/><path d="M309.5 514.5H314.5M312 514.5V519.5M311 519.5H313" stroke="#555" stroke-width="1"/>
 <path d="M399 511.5L400 514.5L403 515.5L400 516.5L399 519.5L398 516.5L395 515.5L398 514.5Z M404.5 518L405.1 519.4L406.5 520L405.1 520.6L404.5 522L403.9 520.6L402.5 520L403.9 519.4Z" fill="#555"/>
 <circle cx="460" cy="520" r="7.5" fill="#dce8f8" stroke="#4a8ae0" stroke-width="1.2"/>
 <circle cx="457" cy="520" r="0.9" fill="#2a6ad0"/><circle cx="460" cy="520" r="0.9" fill="#2a6ad0"/><circle cx="463" cy="520" r="0.9" fill="#2a6ad0"/>
 <path d="M545.5 516A7 7 0 1 1 544.5 522" stroke="#555" stroke-width="1.8" fill="none"/><path d="M543 512.5L548 515.5L543 519Z" fill="#555"/><path d="M550 517.5V523.5L555 520.5Z" fill="#555"/>
 <path d="M594 513V528L608 520.5Z" fill="#555"/>
 <path d="M640 527L645 522M653 513L648 518M640 522V527H645M648 513H653V518" stroke="#555" stroke-width="1.6" fill="none"/>
 <rect x="662.5" y="509.5" width="117" height="21" fill="#fff" stroke="#ddd"/>
 <rect x="663" y="510" width="24" height="20" fill="#eeeff1"/><rect x="755" y="510" width="24" height="20" fill="#eeeff1"/>
 <path d="M687.5 510V530M754.5 510V530" stroke="#ddd"/>
 <path d="M670 520H680M762 520H772M767 515V525" stroke="#666" stroke-width="1.6"/>
 <g stroke="#555" fill="none" stroke-width="1.2">
  <path d="M838 514H834V527H846V521M840 523L846.5 516.5L844.5 514.5L838 521V523Z"/>
  <path d="M866.5 512.5H873.5L870 516.5Z"/><path d="M870 516.5V527.5"/><path d="M873 519.5H867Q865.5 519.5 865.5 521.5Q865.5 523.5 867 523.5H873"/><rect x="873" y="519.5" width="6" height="4" rx="1" stroke="#bbb" stroke-dasharray="1 1"/>
  <path d="M894.5 512.5H905.5V514L901.5 518.5V527.5H898.5V518.5L894.5 514Z"/><path d="M903.5 521.5H906.5M903.5 523.5H906.5M903.5 525.5H906.5" stroke-width="0.9"/>
  <path d="M926 514H939M926 525H939"/><circle cx="928" cy="514" r="2.5" fill="#fff"/><circle cx="936" cy="525" r="2.5" fill="#fff"/>
  <rect x="966.5" y="513.5" width="16" height="13" rx="1"/><path d="M969 520H980M969 520L971 518M969 520L971 522M980 520L978 518M980 520L978 522"/>
  <rect x="997.5" y="513.5" width="16" height="13" rx="1"/>
  <circle cx="1036.5" cy="520" r="7"/><path d="M1033 520H1040"/>
  <circle cx="1168.3" cy="520" r="7"/><path d="M1165 520H1172M1168.3 516.5V523.5"/>
 </g>
 <text x="999.5" y="523.5" font-size="7.5" fill="#555">1:1</text>
 <path d="M1057 520H1146" stroke="#dde3ea" stroke-width="2"/>
 <circle cx="1057" cy="519.5" r="4.5" fill="#fff" stroke="#4a8ae0" stroke-width="1.5"/>
</svg>
<div class="bt" style="left:41px">背景</div>
<div class="bt" style="left:105px">前景</div>
<div class="bt" style="left:169px">字幕</div>
<div class="bt" style="left:234px">语音合成</div>
<div class="bt" style="left:322px">语音识别</div>
<div class="bt" style="left:409px">特效</div>
<div class="a" style="left:688px;top:513px;width:66px;text-align:center;font-size:12px;line-height:14px;color:#666;font-weight:bold">00:13.54</div>

<!-- timeline -->
<div class="a" style="left:0;top:575px;width:1186px;height:28px;background:#eceef2"></div>
<svg style="left:0;top:545px" width="1195" height="174" viewBox="0 545 1195 174">
 <path d="M0 603.5H1186M0 632.5H1186M0 661.5H1186M0 690.5H1186" stroke="#dcdcdc" stroke-width="1"/>
 <path d="M0 603.5H1186" stroke="#cfd1d5" stroke-width="1.5"/>
 <path d="M201.5 545V712M1186.5 545V712" stroke="#dcdcdc"/><path d="M202 574.5H1186" stroke="#ddd"/>
 <path d="M201.8 564V574M216.7 569V574M231.6 569V574M246.5 569V574M261.4 569V574M276.4 564V574M291.3 569V574M306.2 569V574M321.1 569V574M336.0 569V574M350.9 564V574M365.8 569V574M380.7 569V574M395.6 569V574M410.5 569V574M425.5 564V574M440.4 569V574M455.3 569V574M470.2 569V574M485.1 569V574M500.0 564V574M514.9 569V574M529.8 569V574M544.7 569V574M559.6 569V574M574.5 564V574M589.5 569V574M604.4 569V574M619.3 569V574M634.2 569V574M649.1 564V574M664.0 569V574M678.9 569V574M693.8 569V574M708.7 569V574M723.7 564V574M738.6 569V574M753.5 569V574M768.4 569V574M783.3 569V574M798.2 564V574M813.1 569V574M828.0 569V574M842.9 569V574M857.8 569V574M872.8 564V574M887.7 569V574M902.6 569V574M917.5 569V574M932.4 569V574M947.3 564V574M962.2 569V574M977.1 569V574M992.0 569V574M1006.9 569V574M1021.8 564V574M1036.8 569V574M1051.7 569V574M1066.6 569V574M1081.5 569V574M1096.4 564V574M1111.3 569V574M1126.2 569V574M1141.1 569V574M1156.0 569V574M1171.0 564V574M1185.9 569V574" stroke="#bbb" stroke-width="1"/>
 <text x="204.5" y="558" font-size="13" fill="#333" font-family="Liberation Serif">0s</text><text x="276.4" y="558" font-size="13" fill="#333" font-family="Liberation Serif" text-anchor="middle">1s</text><text x="350.9" y="558" font-size="13" fill="#333" font-family="Liberation Serif" text-anchor="middle">2s</text><text x="425.4" y="558" font-size="13" fill="#333" font-family="Liberation Serif" text-anchor="middle">3s</text><text x="500.0" y="558" font-size="13" fill="#333" font-family="Liberation Serif" text-anchor="middle">4s</text><text x="574.5" y="558" font-size="13" fill="#333" font-family="Liberation Serif" text-anchor="middle">5s</text><text x="649.1" y="558" font-size="13" fill="#333" font-family="Liberation Serif" text-anchor="middle">6s</text><text x="723.7" y="558" font-size="13" fill="#333" font-family="Liberation Serif" text-anchor="middle">7s</text><text x="872.8" y="558" font-size="13" fill="#333" font-family="Liberation Serif" text-anchor="middle">9s</text><text x="947.3" y="558" font-size="13" fill="#333" font-family="Liberation Serif" text-anchor="middle">10s</text><text x="1021.8" y="558" font-size="13" fill="#333" font-family="Liberation Serif" text-anchor="middle">11s</text><text x="1096.4" y="558" font-size="13" fill="#333" font-family="Liberation Serif" text-anchor="middle">12s</text><text x="1148.7" y="558" font-size="13" fill="#333" font-family="Liberation Serif" text-anchor="middle">13s</text>
 <!-- header icons -->
 <g stroke="#555" fill="none" stroke-width="1.1">
  <path d="M12.5 555V553.5H17L18.5 555H24.5V564.5H12.5Z"/><path d="M15 560H21M19 558L21 560L19 562"/>
  <path d="M37.5 564.5V553.5H42L43.5 555H49.5V559M43 564.5H37.5M46 560V566M43 563H49"/>
 </g>
 <g stroke="#999" fill="none" stroke-width="1.1">
  <path d="M68.5 552V566M65 562L68.5 566L72 562M64 552H73"/>
  <path d="M93.5 552V566M90 556L93.5 552L97 556M89 566H98"/>
  <path d="M121.5 554H132.5M125 554V552H129V554M122.5 556V566H131.5V556M125 558V564M129 558V564"/>
 </g>
 <rect x="149.5" y="557" width="10" height="7" rx="1" fill="#6a7088"/><path d="M150 558L152 553.5Q154.5 551.5 157 553.5L159 558Z" fill="#6a7088"/>
 <path d="M175.5 559Q183 552 190.5 559Q183 566 175.5 559Z" fill="#6a7088"/><circle cx="183" cy="559" r="2.6" fill="#fff"/><circle cx="183" cy="559" r="1.4" fill="#556070"/>
 <!-- row icons -->
 <rect x="7.5" y="583.5" width="12" height="12" fill="#d8dade" stroke="#8a8e96"/><path d="M20 587L25 584V595L20 592Z" fill="#d8dade" stroke="#8a8e96"/>
 <text x="9" y="624" font-size="19" fill="#707c90" font-family="Liberation Serif">T</text>
 <path d="M13 655V642L22 638V652" stroke="#7a8496" stroke-width="1.2" fill="none"/><circle cx="11" cy="655" r="2.5" fill="none" stroke="#6a7280" stroke-width="1.2"/><circle cx="20" cy="652.5" r="2.5" fill="none" stroke="#6a7280" stroke-width="1.2"/>
 <path d="M9.5 683.5V668.5H20" stroke="#6a7280" stroke-width="1.1" fill="none"/><path d="M9.5 683.5H14" stroke="#6a7280" stroke-width="1.1"/><path d="M15.5 672H20.5L23.5 675V680L20.5 683H15.5L12.5 680V675Z" fill="#6e7e94"/>
 <text x="9" y="712" font-size="19" fill="#707c90" font-family="Liberation Serif">T</text>
 <circle cx="125" cy="589" r="8.2" fill="#1f6fd8"/><text x="125" y="594" font-size="12" font-weight="bold" fill="#fff" text-anchor="middle">?</text>
 <circle cx="125" cy="647" r="8.2" fill="#1f6fd8"/><text x="125" y="652" font-size="12" font-weight="bold" fill="#fff" text-anchor="middle">?</text>
 <g fill="#888">
  <circle cx="150" cy="589" r="1.9"/><circle cx="178" cy="589" r="1.9"/>
  <circle cx="150" cy="618" r="1.9"/><circle cx="178" cy="618" r="1.9"/>
  <circle cx="150" cy="647" r="1.9"/><circle cx="178" cy="647" r="1.9"/>
  <circle cx="150" cy="676" r="1.9"/><circle cx="178" cy="676" r="1.9"/>
  <circle cx="150" cy="705" r="1.9"/><circle cx="178" cy="705" r="1.9"/>
 </g>
 <!-- blocks -->
 <rect x="202" y="577" width="149" height="23.5" rx="3" fill="#4a90e2"/>
 <path d="M386 580.5L394.5 589L386 597.5L377.5 589Z" fill="#5cb85c"/><path d="M386 585V593M382 589H390" stroke="#fff" stroke-width="2"/>
 <defs>
  <linearGradient id="gb" x1="0" y1="0" x2="1" y2="1"><stop offset="0.5" stop-color="#5f9ad8"/><stop offset="0.5" stop-color="#6fb0e8"/></linearGradient>
 </defs>
 <rect x="939" y="606" width="116" height="22.5" rx="3" fill="url(#gb)"/>
 <rect x="1054" y="606" width="118.5" height="22.5" rx="3" fill="#5b9de6"/>
 <rect x="1172" y="606" width="14" height="22.5" fill="#6fb0e8"/>
 <rect x="930.5" y="635" width="256" height="23" rx="2" fill="#5b8fd0"/>
 <rect x="947" y="635" width="228" height="23" fill="#6a9ad6"/>
 <path d="M945 646.4 L945.0 645.7 L945.5 645.7 L946.0 643.2 L946.5 640.7 L947.0 638.7 L947.5 639.0 L948.0 638.3 L948.5 637.6 L949.0 638.5 L949.5 637.2 L950.0 636.6 L950.5 635.8 L951.0 638.1 L951.5 637.3 L952.0 638.0 L952.5 635.6 L953.0 636.1 L953.5 638.4 L954.0 635.5 L954.5 635.9 L955.0 637.2 L955.5 637.8 L956.0 639.6 L956.5 640.6 L957.0 640.2 L957.5 642.5 L958.0 645.7 L958.5 645.7 L959.0 645.7 L959.5 645.7 L960.0 645.7 L960.5 645.7 L961.0 645.7 L961.5 645.7 L962.0 642.6 L962.5 641.2 L963.0 641.0 L963.5 639.4 L964.0 639.0 L964.5 637.5 L965.0 638.2 L965.5 637.6 L966.0 637.9 L966.5 637.4 L967.0 638.1 L967.5 638.7 L968.0 636.8 L968.5 637.1 L969.0 637.9 L969.5 638.8 L970.0 640.3 L970.5 641.3 L971.0 642.5 L971.5 645.7 L972.0 645.7 L972.5 645.7 L973.0 645.7 L973.5 645.7 L974.0 645.7 L974.5 645.7 L975.0 645.7 L975.5 643.1 L976.0 640.2 L976.5 639.9 L977.0 638.1 L977.5 638.8 L978.0 636.7 L978.5 636.7 L979.0 639.0 L979.5 638.2 L980.0 635.8 L980.5 637.2 L981.0 635.5 L981.5 637.4 L982.0 638.6 L982.5 636.9 L983.0 636.6 L983.5 638.5 L984.0 639.3 L984.5 639.0 L985.0 638.0 L985.5 639.3 L986.0 641.7 L986.5 643.5 L987.0 645.7 L987.5 645.7 L988.0 645.7 L988.5 645.7 L989.0 645.7 L989.5 645.7 L990.0 645.7 L990.5 645.7 L991.0 645.7 L991.5 645.7 L992.0 645.7 L992.5 645.7 L993.0 645.7 L993.5 645.7 L994.0 645.7 L994.5 645.7 L995.0 645.7 L995.5 645.7 L996.0 645.7 L996.5 642.8 L997.0 642.1 L997.5 640.1 L998.0 641.0 L998.5 639.8 L999.0 639.9 L999.5 640.4 L1000.0 639.0 L1000.5 640.5 L1001.0 639.4 L1001.5 640.8 L1002.0 640.4 L1002.5 641.3 L1003.0 641.7 L1003.5 641.5 L1004.0 645.7 L1004.5 645.7 L1005.0 645.7 L1005.5 645.7 L1006.0 645.7 L1006.5 645.7 L1007.0 645.7 L1007.5 645.7 L1008.0 645.7 L1008.5 645.7 L1009.0 641.4 L1009.5 641.0 L1010.0 639.0 L1010.5 640.0 L1011.0 639.1 L1011.5 637.5 L1012.0 637.9 L1012.5 639.3 L1013.0 636.5 L1013.5 638.8 L1014.0 638.6 L1014.5 637.2 L1015.0 638.6 L1015.5 638.9 L1016.0 639.8 L1016.5 640.0 L1017.0 639.2 L1017.5 640.6 L1018.0 640.6 L1018.5 642.4 L1019.0 645.7 L1019.5 645.7 L1020.0 645.7 L1020.5 645.7 L1021.0 645.7 L1021.5 645.7 L1022.0 645.7 L1022.5 645.7 L1023.0 645.7 L1023.5 643.6 L1024.0 641.7 L1024.5 641.6 L1025.0 641.0 L1025.5 640.0 L1026.0 641.1 L1026.5 640.9 L1027.0 638.9 L1027.5 638.9 L1028.0 640.1 L1028.5 640.2 L1029.0 638.7 L1029.5 638.1 L1030.0 640.0 L1030.5 638.0 L1031.0 638.2 L1031.5 638.9 L1032.0 639.5 L1032.5 640.3 L1033.0 640.6 L1033.5 638.5 L1034.0 640.4 L1034.5 639.5 L1035.0 640.7 L1035.5 639.8 L1036.0 640.7 L1036.5 641.7 L1037.0 642.4 L1037.5 642.4 L1038.0 645.7 L1038.5 645.7 L1039.0 645.7 L1039.5 645.7 L1040.0 645.7 L1040.5 645.7 L1041.0 645.7 L1041.5 645.7 L1042.0 645.7 L1042.5 645.7 L1043.0 642.4 L1043.5 641.2 L1044.0 639.8 L1044.5 638.5 L1045.0 638.7 L1045.5 639.2 L1046.0 637.2 L1046.5 639.0 L1047.0 639.5 L1047.5 638.6 L1048.0 638.1 L1048.5 639.2 L1049.0 638.9 L1049.5 638.5 L1050.0 638.0 L1050.5 639.5 L1051.0 639.1 L1051.5 638.1 L1052.0 638.4 L1052.5 639.8 L1053.0 640.6 L1053.5 642.2 L1054.0 645.7 L1054.5 645.7 L1055.0 645.7 L1055.5 645.7 L1056.0 645.7 L1056.5 645.7 L1057.0 645.7 L1057.5 645.7 L1058.0 645.7 L1058.5 645.7 L1059.0 645.7 L1059.5 645.7 L1060.0 643.7 L1060.5 643.0 L1061.0 642.5 L1061.5 640.4 L1062.0 640.4 L1062.5 639.5 L1063.0 641.2 L1063.5 639.6 L1064.0 639.8 L1064.5 639.0 L1065.0 639.9 L1065.5 638.0 L1066.0 640.2 L1066.5 638.9 L1067.0 638.3 L1067.5 637.8 L1068.0 638.2 L1068.5 638.2 L1069.0 638.0 L1069.5 637.6 L1070.0 639.2 L1070.5 638.3 L1071.0 637.7 L1071.5 637.9 L1072.0 639.1 L1072.5 638.2 L1073.0 638.1 L1073.5 639.0 L1074.0 639.0 L1074.5 639.8 L1075.0 639.4 L1075.5 639.6 L1076.0 641.0 L1076.5 640.0 L1077.0 639.6 L1077.5 640.2 L1078.0 640.9 L1078.5 642.1 L1079.0 642.3 L1079.5 644.1 L1080.0 645.7 L1080.5 645.7 L1081.0 645.7 L1081.5 645.7 L1082.0 645.7 L1082.5 645.7 L1083.0 645.7 L1083.5 645.7 L1084.0 645.7 L1084.5 645.7 L1085.0 645.7 L1085.5 645.7 L1086.0 645.7 L1086.5 645.7 L1087.0 643.9 L1087.5 642.8 L1088.0 643.3 L1088.5 642.0 L1089.0 642.8 L1089.5 641.8 L1090.0 641.8 L1090.5 642.1 L1091.0 641.2 L1091.5 641.4 L1092.0 641.1 L1092.5 640.6 L1093.0 641.7 L1093.5 642.2 L1094.0 641.7 L1094.5 641.1 L1095.0 642.0 L1095.5 642.1 L1096.0 641.0 L1096.5 641.6 L1097.0 642.2 L1097.5 641.8 L1098.0 642.9 L1098.5 642.9 L1099.0 644.0 L1099.5 645.7 L1100.0 645.7 L1100.5 645.7 L1101.0 645.7 L1101.5 645.7 L1102.0 645.7 L1102.5 645.7 L1103.0 645.7 L1103.5 645.7 L1104.0 645.7 L1104.5 645.7 L1105.0 645.7 L1105.5 645.7 L1106.0 645.7 L1106.5 645.7 L1107.0 645.7 L1107.5 645.7 L1108.0 645.7 L1108.5 645.7 L1109.0 645.7 L1109.5 645.7 L1110.0 645.7 L1110.5 645.7 L1111.0 645.7 L1111.5 645.7 L1112.0 645.7 L1112.5 645.7 L1113.0 645.7 L1113.5 645.7 L1114.0 645.7 L1114.5 645.7 L1115.0 645.7 L1115.5 645.7 L1116.0 645.7 L1116.5 645.7 L1117.0 640.9 L1117.5 638.8 L1118.0 637.5 L1118.5 636.9 L1119.0 637.9 L1119.5 636.9 L1120.0 637.6 L1120.5 638.0 L1121.0 636.7 L1121.5 635.5 L1122.0 635.5 L1122.5 636.1 L1123.0 635.5 L1123.5 638.0 L1124.0 638.7 L1124.5 638.3 L1125.0 639.4 L1125.5 640.4 L1126.0 641.3 L1126.5 645.7 L1127.0 645.7 L1127.5 645.7 L1128.0 645.7 L1128.5 645.7 L1129.0 645.7 L1129.5 645.7 L1130.0 645.7 L1130.5 641.9 L1131.0 641.1 L1131.5 640.8 L1132.0 639.2 L1132.5 638.4 L1133.0 639.4 L1133.5 640.1 L1134.0 640.0 L1134.5 637.6 L1135.0 639.8 L1135.5 637.8 L1136.0 638.1 L1136.5 638.9 L1137.0 637.5 L1137.5 639.8 L1138.0 639.5 L1138.5 638.8 L1139.0 640.1 L1139.5 638.2 L1140.0 640.0 L1140.5 640.6 L1141.0 641.1 L1141.5 640.4 L1142.0 641.5 L1142.5 642.5 L1143.0 645.7 L1143.5 645.7 L1144.0 645.7 L1144.5 645.7 L1145.0 645.7 L1145.5 641.5 L1146.0 640.1 L1146.5 639.0 L1147.0 639.0 L1147.5 639.9 L1148.0 638.8 L1148.5 639.4 L1149.0 639.7 L1149.5 638.2 L1150.0 637.4 L1150.5 638.9 L1151.0 638.6 L1151.5 638.4 L1152.0 637.4 L1152.5 638.0 L1153.0 637.9 L1153.5 637.8 L1154.0 639.0 L1154.5 638.3 L1155.0 638.5 L1155.5 641.0 L1156.0 639.9 L1156.5 641.4 L1157.0 645.7 L1157.5 645.7 L1158.0 645.7 L1158.5 645.7 L1159.0 645.7 L1159.5 645.7 L1160.0 645.7 L1160.5 645.7 L1161.0 645.7 L1161.5 645.7 L1162.0 645.7 L1162.5 645.7 L1163.0 645.7 L1163.5 645.7 L1164.0 645.7 L1164.5 645.7 L1165.0 645.7 L1165.5 645.7 L1166.0 645.7 L1166.5 645.7 L1167.0 645.7 L1167.5 645.7 L1168.0 645.7 L1168.5 645.7 L1169.0 645.7 L1169.5 645.7 L1170.0 645.7 L1170.5 645.7 L1171.0 645.7 L1171.5 645.7 L1172.0 645.7 L1172.5 645.7 L1173.0 645.7 L1173.5 645.7 L1174.0 645.7 L1174.5 645.7 L1175.0 645.7 L1175.5 645.7 L1176.0 645.7 L1176.0 647.0 L1175.5 647.0 L1175.0 647.1 L1174.5 647.1 L1174.0 647.0 L1173.5 647.1 L1173.0 647.1 L1172.5 647.1 L1172.0 647.1 L1171.5 647.0 L1171.0 647.1 L1170.5 647.0 L1170.0 647.1 L1169.5 647.1 L1169.0 647.1 L1168.5 647.1 L1168.0 647.0 L1167.5 647.1 L1167.0 647.1 L1166.5 647.1 L1166.0 647.1 L1165.5 647.1 L1165.0 647.0 L1164.5 647.1 L1164.0 647.1 L1163.5 647.0 L1163.0 647.0 L1162.5 647.0 L1162.0 647.1 L1161.5 647.1 L1161.0 647.0 L1160.5 647.0 L1160.0 647.1 L1159.5 647.0 L1159.0 647.1 L1158.5 647.0 L1158.0 647.0 L1157.5 647.1 L1157.0 647.0 L1156.5 650.7 L1156.0 652.5 L1155.5 651.6 L1155.0 654.1 L1154.5 654.1 L1154.0 653.7 L1153.5 654.4 L1153.0 654.8 L1152.5 653.6 L1152.0 654.3 L1151.5 653.8 L1151.0 653.4 L1150.5 653.6 L1150.0 655.0 L1149.5 654.0 L1149.0 653.0 L1148.5 653.0 L1148.0 653.2 L1147.5 652.3 L1147.0 653.6 L1146.5 653.7 L1146.0 651.9 L1145.5 651.2 L1145.0 647.1 L1144.5 647.1 L1144.0 647.1 L1143.5 647.0 L1143.0 647.1 L1142.5 650.0 L1142.0 651.0 L1141.5 651.5 L1141.0 651.6 L1140.5 651.8 L1140.0 652.2 L1139.5 654.3 L1139.0 652.3 L1138.5 653.4 L1138.0 653.0 L1137.5 652.1 L1137.0 654.7 L1136.5 653.3 L1136.0 654.6 L1135.5 654.9 L1135.0 652.3 L1134.5 654.5 L1134.0 651.9 L1133.5 652.2 L1133.0 653.3 L1132.5 654.3 L1132.0 653.0 L1131.5 651.4 L1131.0 651.0 L1130.5 650.6 L1130.0 647.1 L1129.5 647.0 L1129.0 647.1 L1128.5 647.0 L1128.0 647.0 L1127.5 647.0 L1127.0 647.1 L1126.5 647.0 L1126.0 651.0 L1125.5 652.1 L1125.0 652.4 L1124.5 654.2 L1124.0 653.1 L1123.5 654.2 L1123.0 656.1 L1122.5 655.5 L1122.0 656.6 L1121.5 656.4 L1121.0 655.2 L1120.5 654.1 L1120.0 654.6 L1119.5 654.7 L1119.0 653.9 L1118.5 655.4 L1118.0 654.8 L1117.5 653.5 L1117.0 651.8 L1116.5 647.1 L1116.0 647.1 L1115.5 647.0 L1115.0 647.1 L1114.5 647.1 L1114.0 647.1 L1113.5 647.0 L1113.0 647.0 L1112.5 647.1 L1112.0 647.0 L1111.5 647.1 L1111.0 647.1 L1110.5 647.0 L1110.0 647.0 L1109.5 647.1 L1109.0 647.0 L1108.5 647.0 L1108.0 647.1 L1107.5 647.0 L1107.0 647.1 L1106.5 647.0 L1106.0 647.0 L1105.5 647.1 L1105.0 647.0 L1104.5 647.0 L1104.0 647.1 L1103.5 647.1 L1103.0 647.1 L1102.5 647.0 L1102.0 647.0 L1101.5 647.1 L1101.0 647.0 L1100.5 647.1 L1100.0 647.0 L1099.5 647.0 L1099.0 648.5 L1098.5 649.4 L1098.0 649.7 L1097.5 650.7 L1097.0 650.4 L1096.5 650.6 L1096.0 651.1 L1095.5 650.1 L1095.0 650.7 L1094.5 651.7 L1094.0 651.1 L1093.5 650.0 L1093.0 650.4 L1092.5 652.2 L1092.0 651.2 L1091.5 651.2 L1091.0 651.1 L1090.5 650.4 L1090.0 650.7 L1089.5 650.6 L1089.0 649.7 L1088.5 650.1 L1088.0 649.4 L1087.5 649.9 L1087.0 648.6 L1086.5 647.0 L1086.0 647.1 L1085.5 647.0 L1085.0 647.0 L1084.5 647.0 L1084.0 647.0 L1083.5 647.0 L1083.0 647.1 L1082.5 647.1 L1082.0 647.1 L1081.5 647.1 L1081.0 647.1 L1080.5 647.0 L1080.0 647.1 L1079.5 648.5 L1079.0 650.5 L1078.5 650.6 L1078.0 651.2 L1077.5 652.5 L1077.0 653.0 L1076.5 652.6 L1076.0 651.7 L1075.5 652.6 L1075.0 653.3 L1074.5 652.9 L1074.0 653.5 L1073.5 653.5 L1073.0 654.4 L1072.5 653.8 L1072.0 653.4 L1071.5 653.7 L1071.0 654.2 L1070.5 653.9 L1070.0 652.6 L1069.5 654.3 L1069.0 654.4 L1068.5 654.1 L1068.0 653.7 L1067.5 654.9 L1067.0 654.1 L1066.5 653.1 L1066.0 652.3 L1065.5 654.3 L1065.0 652.5 L1064.5 653.1 L1064.0 653.0 L1063.5 652.8 L1063.0 651.3 L1062.5 653.1 L1062.0 652.4 L1061.5 651.5 L1061.0 650.1 L1060.5 649.7 L1060.0 648.8 L1059.5 647.0 L1059.0 647.0 L1058.5 647.0 L1058.0 647.0 L1057.5 647.0 L1057.0 647.0 L1056.5 647.1 L1056.0 647.1 L1055.5 647.0 L1055.0 647.1 L1054.5 647.1 L1054.0 647.1 L1053.5 650.3 L1053.0 652.0 L1052.5 652.1 L1052.0 653.9 L1051.5 654.4 L1051.0 652.6 L1050.5 653.2 L1050.0 653.7 L1049.5 653.7 L1049.0 652.9 L1048.5 653.0 L1048.0 654.2 L1047.5 653.1 L1047.0 653.3 L1046.5 653.1 L1046.0 655.0 L1045.5 653.1 L1045.0 653.4 L1044.5 653.4 L1044.0 652.7 L1043.5 651.3 L1043.0 650.0 L1042.5 647.1 L1042.0 647.0 L1041.5 647.0 L1041.0 647.0 L1040.5 647.0 L1040.0 647.0 L1039.5 647.1 L1039.0 647.0 L1038.5 647.1 L1038.0 647.1 L1037.5 649.8 L1037.0 650.4 L1036.5 651.1 L1036.0 651.3 L1035.5 652.9 L1035.0 651.6 L1034.5 652.8 L1034.0 652.4 L1033.5 653.4 L1033.0 651.8 L1032.5 652.4 L1032.0 653.0 L1031.5 653.3 L1031.0 654.6 L1030.5 654.5 L1030.0 652.5 L1029.5 653.6 L1029.0 653.7 L1028.5 652.1 L1028.0 651.9 L1027.5 652.8 L1027.0 653.3 L1026.5 651.2 L1026.0 651.3 L1025.5 652.5 L1025.0 651.4 L1024.5 650.6 L1024.0 650.8 L1023.5 648.9 L1023.0 647.1 L1022.5 647.1 L1022.0 647.1 L1021.5 647.1 L1021.0 647.1 L1020.5 647.0 L1020.0 647.0 L1019.5 647.1 L1019.0 647.1 L1018.5 650.1 L1018.0 651.6 L1017.5 651.6 L1017.0 653.3 L1016.5 652.4 L1016.0 652.6 L1015.5 653.5 L1015.0 653.9 L1014.5 654.5 L1014.0 653.3 L1013.5 654.0 L1013.0 656.2 L1012.5 653.4 L1012.0 653.7 L1011.5 654.0 L1011.0 652.9 L1010.5 652.2 L1010.0 653.4 L1009.5 651.0 L1009.0 651.1 L1008.5 647.0 L1008.0 647.0 L1007.5 647.1 L1007.0 647.1 L1006.5 647.1 L1006.0 647.0 L1005.5 647.0 L1005.0 647.0 L1004.5 647.0 L1004.0 647.1 L1003.5 651.1 L1003.0 650.4 L1002.5 650.8 L1002.0 652.2 L1001.5 651.6 L1001.0 653.1 L1000.5 651.6 L1000.0 653.1 L999.5 651.8 L999.0 652.7 L998.5 652.3 L998.0 651.5 L997.5 652.7 L997.0 650.3 L996.5 649.7 L996.0 647.1 L995.5 647.1 L995.0 647.0 L994.5 647.0 L994.0 647.0 L993.5 647.1 L993.0 647.0 L992.5 647.0 L992.0 647.1 L991.5 647.0 L991.0 647.1 L990.5 647.0 L990.0 647.1 L989.5 647.0 L989.0 647.0 L988.5 647.1 L988.0 647.0 L987.5 647.0 L987.0 647.1 L986.5 649.2 L986.0 650.6 L985.5 652.6 L985.0 654.0 L984.5 653.5 L984.0 652.8 L983.5 653.3 L983.0 655.7 L982.5 655.3 L982.0 654.1 L981.5 655.3 L981.0 657.2 L980.5 654.9 L980.0 656.7 L979.5 653.7 L979.0 653.0 L978.5 655.3 L978.0 656.0 L977.5 653.9 L977.0 653.8 L976.5 652.2 L976.0 652.1 L975.5 649.4 L975.0 647.0 L974.5 647.0 L974.0 647.0 L973.5 647.1 L973.0 647.1 L972.5 647.1 L972.0 647.1 L971.5 647.1 L971.0 649.8 L970.5 651.3 L970.0 652.4 L969.5 653.2 L969.0 653.6 L968.5 655.0 L968.0 655.4 L967.5 653.6 L967.0 654.7 L966.5 654.9 L966.0 654.6 L965.5 653.9 L965.0 654.1 L964.5 655.0 L964.0 652.8 L963.5 652.5 L963.0 651.6 L962.5 651.5 L962.0 649.7 L961.5 647.1 L961.0 647.0 L960.5 647.1 L960.0 647.1 L959.5 647.0 L959.0 647.0 L958.5 647.1 L958.0 647.0 L957.5 650.1 L957.0 652.0 L956.5 651.7 L956.0 653.2 L955.5 654.6 L955.0 654.9 L954.5 656.2 L954.0 656.8 L953.5 654.0 L953.0 656.6 L952.5 656.2 L952.0 654.5 L951.5 655.0 L951.0 654.5 L950.5 656.7 L950.0 656.0 L949.5 655.5 L949.0 654.3 L948.5 654.7 L948.0 653.9 L947.5 653.5 L947.0 653.9 L946.5 651.6 L946.0 649.3 L945.5 647.0 L945.0 647.1 Z" fill="#000"/>
 <rect x="1141" y="635" width="45" height="23" fill="#6a9ad6" fill-opacity="0"/>
 <rect x="586" y="664" width="60" height="23" rx="2" fill="#5d98d4"/>
 <rect x="645.5" y="664" width="260" height="23" rx="3" fill="#5a9de6"/>
 <rect x="905.5" y="664" width="36.5" height="23" rx="2" fill="#6ab0e8"/>
 <rect x="645.5" y="693" width="212" height="20" rx="2" fill="url(#gb)"/>
 <path d="M881.7 696L889 703.3L881.7 710.6L874.4 703.3Z" fill="#5cb85c"/><path d="M881.7 699.5V707M878 703.3H885.5" stroke="#fff" stroke-width="2"/>
 <rect x="906" y="693" width="36" height="20" rx="2" fill="#6ab0e8"/>
 <text x="798.3" y="558" font-size="13" fill="#333" font-family="Liberation Serif" text-anchor="middle">8s</text>
 <!-- playhead -->
 <path d="M799.4 573V707" stroke="#d02828" stroke-width="1.3"/>
 <path d="M791.5 552.5H807.5V567L799.5 573.5L791.5 567Z" fill="#4a92ea" stroke="#1f4f90" stroke-width="1"/>
 <path d="M797 557V565M799.5 557V565M802 557V565" stroke="#1f4f90" stroke-width="1"/>
 <!-- scrollbars -->
 <rect x="206" y="707" width="952" height="6" fill="#acacac"/>
 <rect x="1189.5" y="575" width="5.5" height="37" fill="#c4c4c4"/>
</svg>
<style>.rt{position:absolute;left:38px;font-size:12px;line-height:14px;color:#333;white-space:nowrap}
.bk{position:absolute;font-size:12px;line-height:14px;color:#fff;white-space:nowrap;text-align:center}</style>
<div class="rt" style="top:582px">镜头</div>
<div class="rt" style="top:611px">如何预防心脏病?</div>
<div class="rt" style="top:640px">语音 1</div>
<div class="rt" style="top:669px">圆形(C)</div>
<div class="rt" style="top:698px;width:105px;overflow:hidden">采取人工呼吸的方式</div>
<div class="bk" style="left:202px;top:582px;width:149px">默认镜头</div>
<div class="bk" style="left:939px;top:611px;width:116px">字符弹出</div>
<div class="bk" style="left:1054px;top:611px;width:118px">双色波浪线01</div>
<div class="bk" style="left:586px;top:669px;width:60px">下方滑入</div>
<div class="bk" style="left:645px;top:669px;width:260px">热点波</div>
<div class="bk" style="left:905px;top:669px;width:37px">弹出</div>
<div class="bk" style="left:645px;top:697px;width:212px;height:10px;overflow:hidden">字符弹出</div>
<div class="bk" style="left:906px;top:697px;width:36px;height:10px;overflow:hidden">弹出</div>
<div class="bk" style="left:932px;top:640px">无</div>
<div class="bk" style="left:990px;top:644px;font-size:11.5px;-webkit-text-stroke:0.2px #fff">生活中我们该如何预防心脏病?</div>
<div class="bk" style="left:1176px;top:640px">无</div>
</body></html>
